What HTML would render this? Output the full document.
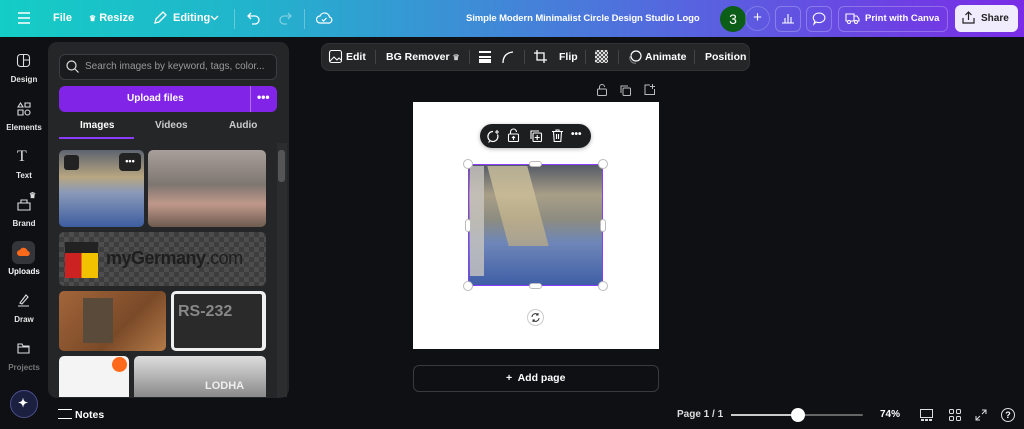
<!DOCTYPE html>
<html><head><meta charset="utf-8"><style>
*{box-sizing:border-box;margin:0;padding:0}
body{width:1024px;height:429px;overflow:hidden;background:#0e1014;font-family:"Liberation Sans",sans-serif;color:#fff;position:relative;font-weight:bold}
.abs{position:absolute}
.top{left:0;top:0;width:1024px;height:37px;background:linear-gradient(90deg,#14cdc6 0%,#22b3cc 25%,#3c8fd6 45%,#5a5fe0 70%,#7a2ce6 100%)}
.t{position:absolute;font-size:11px;color:#fff;white-space:nowrap}
.side .lbl{position:absolute;width:48px;text-align:center;font-size:8px;color:#e6e6e6;left:0}
.panel{left:48px;top:42px;width:241px;height:356px;background:#252627;border-radius:9px}
svg{position:absolute;overflow:visible}
</style></head><body>
<div class="abs top"></div>
<svg style="left:17px;top:12px" width="14" height="12"><path d="M1 1h12M1 6h12M1 11h12" stroke="#fff" stroke-width="1.6"/></svg>
<div class="t" style="left:53px;top:12px">File</div>
<div class="t" style="left:89px;top:12px"><span style="font-size:8px">♛</span> Resize</div>
<svg style="left:153px;top:11px" width="14" height="14"><path d="M2 12l1-4 7-7 3 3-7 7z" fill="none" stroke="#fff" stroke-width="1.3"/></svg>
<div class="t" style="left:173px;top:12px">Editing</div>
<svg style="left:210px;top:15px" width="9" height="6"><path d="M1 1l3.5 3.5L8 1" fill="none" stroke="#fff" stroke-width="1.3"/></svg>
<div class="abs" style="left:234px;top:9px;width:1px;height:20px;background:rgba(255,255,255,.3)"></div>
<svg style="left:247px;top:12px" width="14" height="12"><path d="M4 1L1 4l3 3M1 4h7a4 4 0 010 8H5" fill="none" stroke="#fff" stroke-width="1.3"/></svg>
<svg style="left:278px;top:12px" width="14" height="12"><path d="M10 1l3 3-3 3M13 4H6a4 4 0 000 8h3" fill="none" stroke="rgba(255,255,255,.4)" stroke-width="1.3"/></svg>
<div class="abs" style="left:304px;top:9px;width:1px;height:20px;background:rgba(255,255,255,.3)"></div>
<svg style="left:316px;top:12px" width="16" height="12"><path d="M4 11a3.5 3.5 0 010-7 5 5 0 019.5 1A3 3 0 0112 11z" fill="none" stroke="#fff" stroke-width="1.2"/><path d="M6 7.5l1.5 1.5 3-3" fill="none" stroke="#fff" stroke-width="1.2"/></svg>
<div class="t" style="left:466px;top:13px;font-size:9.5px;letter-spacing:-.1px">Simple Modern Minimalist Circle Design Studio Logo</div>
<div class="abs" style="left:720px;top:6px;width:26px;height:26px;border-radius:50%;background:#0c5d18;font-size:14px;text-align:center;line-height:26px;font-weight:normal">3</div>
<div class="abs" style="left:745px;top:6px;width:25px;height:25px;border-radius:50%;border:1px solid rgba(255,255,255,.2);text-align:center;line-height:22px;font-size:15px;font-weight:normal">+</div>
<div class="abs" style="left:775px;top:6px;width:26px;height:26px;border-radius:6px;border:1px solid rgba(255,255,255,.25)"></div>
<svg style="left:782px;top:13px" width="12" height="11"><path d="M0 10h12M3 10V5M6 10V1M9 10V4" stroke="#fff" stroke-width="1.1"/></svg>
<div class="abs" style="left:806px;top:6px;width:26px;height:26px;border-radius:6px;border:1px solid rgba(255,255,255,.25)"></div>
<svg style="left:812px;top:12px" width="14" height="13"><path d="M7 1a6 4.8 0 11-3 9L2 12l.8-3A6 4.8 0 017 1z" fill="none" stroke="#fff" stroke-width="1.1"/></svg>
<div class="abs" style="left:838px;top:6px;width:110px;height:26px;border-radius:6px;border:1px solid rgba(255,255,255,.25)"></div>
<svg style="left:845px;top:13px" width="15" height="11"><path d="M1 1h8v7H1zM9 3h3l2 3v2H9" fill="none" stroke="#fff" stroke-width="1.1"/><circle cx="4" cy="9" r="1.5" fill="#6a4ae2" stroke="#fff"/><circle cx="11" cy="9" r="1.5" fill="#6a4ae2" stroke="#fff"/></svg>
<div class="t" style="left:865px;top:13px;font-size:9.5px">Print with Canva</div>
<div class="abs" style="left:955px;top:5px;width:63px;height:27px;border-radius:6px;background:#f1ecfd"></div>
<svg style="left:962px;top:11px" width="13" height="13"><path d="M6.5 9V1M3.5 4l3-3 3 3M1 7v5h11V7" fill="none" stroke="#222" stroke-width="1.2"/></svg>
<div class="t" style="left:981px;top:13px;color:#222;font-size:10px">Share</div>

<div class="side">
<svg style="left:17px;top:54px" width="13" height="13"><rect x=".5" y=".5" width="12" height="12" rx="3" fill="none" stroke="#ddd" stroke-width="1.1"/><path d="M6.5 1v11M6.5 6H12" stroke="#ddd" stroke-width="1.1"/></svg>
<div class="lbl" style="top:75px">Design</div>
<svg style="left:17px;top:102px" width="14" height="14"><path d="M1 5l2.5-4L6 5zM8 1h5v4H8z M1 8h5v5H1z" fill="none" stroke="#ddd" stroke-width="1.1"/><circle cx="10.5" cy="10.5" r="2.5" fill="none" stroke="#ddd" stroke-width="1.1"/></svg>
<div class="lbl" style="top:123px">Elements</div>
<div class="abs" style="left:17px;top:148px;font-family:'Liberation Serif';font-weight:normal;font-size:16px;color:#ddd">T</div>
<div class="lbl" style="top:171px">Text</div>
<svg style="left:17px;top:198px" width="14" height="13"><path d="M1 5h12v7H1zM4 5V2h6v3" fill="none" stroke="#ddd" stroke-width="1.1"/></svg>
<div class="abs" style="left:29px;top:191px;font-size:8px;color:#ddd">♛</div>
<div class="lbl" style="top:219px">Brand</div>
<div class="abs" style="left:12px;top:241px;width:23px;height:23px;border-radius:6px;background:#33353a"></div>
<svg style="left:17px;top:247px" width="13" height="10"><path d="M3 9a3 3 0 010-6 4 4 0 017.5 1A2.5 2.5 0 0110 9z" fill="#ff6a1a"/></svg>
<div class="lbl" style="top:267px;color:#fff">Uploads</div>
<svg style="left:17px;top:293px" width="14" height="14"><path d="M3 10l6-8 2 2-6 7z M1 13h11" fill="none" stroke="#ddd" stroke-width="1.1"/></svg>
<div class="lbl" style="top:315px">Draw</div>
<svg style="left:17px;top:343px" width="13" height="11"><path d="M1 1h4l1 2h6v7H1z M1 4h11" fill="none" stroke="#ddd" stroke-width="1.1"/></svg>
<div class="lbl" style="top:363px;color:#777">Projects</div>
<div class="abs" style="left:10px;top:390px;width:28px;height:28px;border-radius:50%;background:#1c2040;border:1.5px solid #4b4f8c"></div>
<div class="abs" style="left:18px;top:396px;font-size:12px">✦</div>
</div>

<div class="abs panel"></div>
<div class="abs" style="left:59px;top:54px;width:218px;height:26px;border-radius:6px;background:#1a1b1d;border:1px solid #3c3d40"></div>
<svg style="left:66px;top:60px" width="13" height="13"><circle cx="5.5" cy="5.5" r="4.5" fill="none" stroke="#ddd" stroke-width="1.2"/><path d="M9 9l3.5 3.5" stroke="#ddd" stroke-width="1.2"/></svg>
<div class="t" style="left:85px;top:61px;font-size:10px;color:#999;font-weight:normal">Search images by keyword, tags, color...</div>
<div class="abs" style="left:59px;top:86px;width:218px;height:26px;border-radius:6px;background:#8224e8"></div>
<div class="abs" style="left:250px;top:86px;width:1px;height:26px;background:rgba(255,255,255,.35)"></div>
<div class="t" style="left:127px;top:93px;font-size:10px">Upload files</div>
<div class="t" style="left:257px;top:90px;font-size:12px">•••</div>
<div class="t" style="left:80px;top:120px;font-size:10px">Images</div>
<div class="t" style="left:155px;top:120px;font-size:10px;color:#ccc">Videos</div>
<div class="t" style="left:229px;top:120px;font-size:10px;color:#ccc">Audio</div>
<div class="abs" style="left:59px;top:137px;width:75px;height:2px;background:#8b3dff"></div>
<div class="abs" style="left:277px;top:143px;width:10px;height:254px;background:#2c2d2f"></div>
<div class="abs" style="left:278px;top:150px;width:7px;height:32px;background:#555;border-radius:3px"></div>
<div class="abs" style="left:59px;top:150px;width:85px;height:77px;border-radius:5px;background:linear-gradient(180deg,#5d6370 0%,#b8a680 35%,#8a9ab8 55%,#3e5da0 100%)"></div>
<div class="abs" style="left:64px;top:155px;width:15px;height:15px;border-radius:3px;background:#222"></div>
<div class="abs" style="left:119px;top:153px;width:22px;height:18px;border-radius:4px;background:#222;font-size:9px;text-align:center;line-height:17px">•••</div>
<div class="abs" style="left:148px;top:150px;width:118px;height:77px;border-radius:5px;background:linear-gradient(180deg,#a89f9b 0%,#7e7670 45%,#c0988a 70%,#6e5b50 100%)"></div>
<div class="abs" style="left:59px;top:232px;width:207px;height:54px;border-radius:5px;background:repeating-conic-gradient(#3d3d3e 0 25%,#4d4d4e 0 50%) 0 0/10px 10px"></div>
<div class="abs" style="left:65px;top:242px;width:33px;height:36px;background:linear-gradient(90deg,#c22 0 50%,#f2c200 50%)"></div>
<div class="abs" style="left:65px;top:242px;width:33px;height:11px;background:#222"></div>
<div class="t" style="left:106px;top:248px;font-size:18px;color:#1e1e1e;letter-spacing:-.5px">my<b>Germany</b><span style="font-weight:normal">.com</span></div>
<div class="abs" style="left:59px;top:291px;width:107px;height:60px;border-radius:5px;background:linear-gradient(135deg,#a3653a,#7a4a28 60%,#b47a48)"></div>
<div class="abs" style="left:83px;top:298px;width:30px;height:45px;background:#5a4a3a"></div>
<div class="abs" style="left:171px;top:291px;width:95px;height:60px;border-radius:5px;background:#f0f0f0"></div>
<div class="abs" style="left:174px;top:294px;width:88px;height:54px;background:#2a2a2a;border-radius:2px"></div>
<div class="t" style="left:178px;top:303px;font-size:16px;color:#888">RS-232</div>
<div class="abs" style="left:59px;top:356px;width:70px;height:41px;border-radius:5px 5px 0 0;background:#f4f4f4"></div>
<div class="abs" style="left:112px;top:357px;width:15px;height:15px;border-radius:50%;background:#ff6a1a"></div>
<div class="abs" style="left:134px;top:356px;width:132px;height:41px;border-radius:5px 5px 0 0;background:linear-gradient(180deg,#ddd,#8a8a8a)"></div>
<div class="t" style="left:205px;top:380px;font-size:11px;color:#eee">LODHA</div>

<div class="abs" style="left:58px;top:409px;width:14px;height:10px;border-top:1.5px solid #fff;border-bottom:1.5px solid #fff"></div>
<div class="t" style="left:75px;top:409px;font-size:10.5px">Notes</div>

<div class="abs" style="left:321px;top:43px;width:429px;height:28px;border-radius:8px;background:#252627;border:1px solid #333"></div>
<svg style="left:329px;top:50px" width="13" height="13"><rect x=".5" y=".5" width="12" height="12" rx="2" fill="none" stroke="#fff" stroke-width="1.1"/><path d="M1 11l4-4 3 3 2-2 2 2" fill="none" stroke="#fff"/></svg>
<div class="t" style="left:346px;top:51px;font-size:10.5px">Edit</div>
<div class="abs" style="left:375px;top:50px;width:1px;height:14px;background:#444"></div>
<div class="t" style="left:386px;top:51px;font-size:10.5px">BG Remover <span style="font-size:8px;color:#ccc">♛</span></div>
<div class="abs" style="left:469px;top:50px;width:1px;height:14px;background:#444"></div>
<div class="abs" style="left:479px;top:51px;width:12px;height:12px;border-top:2px solid #fff;border-bottom:4px solid #fff"><div style="margin-top:3px;height:2px;background:#fff"></div></div>
<svg style="left:502px;top:51px" width="12" height="12"><path d="M1 12Q1 2 11 1" fill="none" stroke="#fff" stroke-width="1.3"/></svg>
<div class="abs" style="left:524px;top:50px;width:1px;height:14px;background:#444"></div>
<svg style="left:534px;top:50px" width="13" height="13"><path d="M3 0v10h10M0 3h10v10" fill="none" stroke="#fff" stroke-width="1.3"/></svg>
<div class="t" style="left:559px;top:51px;font-size:10.5px">Flip</div>
<div class="abs" style="left:585px;top:50px;width:1px;height:14px;background:#444"></div>
<div class="abs" style="left:595px;top:50px;width:13px;height:13px;background:repeating-conic-gradient(#ddd 0 25%,#555 0 50%) 0 0/4px 4px"></div>
<div class="abs" style="left:618px;top:50px;width:1px;height:14px;background:#444"></div>
<svg style="left:628px;top:50px" width="14" height="14"><circle cx="8" cy="6" r="5" fill="none" stroke="#fff" stroke-width="1.2"/><path d="M3 5a5 5 0 005 8" fill="none" stroke="#888"/></svg>
<div class="t" style="left:645px;top:51px;font-size:10.5px">Animate</div>
<div class="abs" style="left:694px;top:50px;width:1px;height:14px;background:#444"></div>
<div class="t" style="left:705px;top:51px;font-size:10.5px">Position</div>

<svg style="left:597px;top:84px" width="10" height="12"><rect x=".5" y="5" width="9" height="6.5" rx="1" fill="none" stroke="#bbb"/><path d="M2.5 5V3a2.5 2.5 0 015 0" fill="none" stroke="#bbb"/></svg>
<svg style="left:620px;top:85px" width="11" height="11"><rect x="3" y="3" width="7.5" height="7.5" rx="1" fill="none" stroke="#bbb"/><path d="M1 8V1h7" fill="none" stroke="#bbb"/></svg>
<svg style="left:644px;top:84px" width="11" height="11"><path d="M6 1H1v9.5h9.5V5M8.5 0v5M6 2.5h5" fill="none" stroke="#bbb"/></svg>

<div class="abs" style="left:413px;top:102px;width:246px;height:247px;background:#fff"></div>
<div class="abs" style="left:480px;top:124px;width:111px;height:24px;border-radius:12px;background:#1d1e20;box-shadow:0 1px 4px rgba(0,0,0,.3)"></div>
<svg style="left:487px;top:130px" width="13" height="13"><path d="M6 1.5a5 5 0 104.5 3" fill="none" stroke="#fff" stroke-width="1.2"/><path d="M3 11l-1.5 1.5" stroke="#fff"/><path d="M10 0v4M8 2h4" stroke="#fff" stroke-width="1.1"/></svg>
<svg style="left:508px;top:129px" width="11" height="13"><rect x=".5" y="5" width="10" height="7.5" rx="1" fill="none" stroke="#fff" stroke-width="1.1"/><path d="M2.5 5V3a3 3 0 016 0M5.5 11V7.5M4 9l1.5-1.5L7 9" fill="none" stroke="#fff" stroke-width="1.1"/></svg>
<svg style="left:530px;top:130px" width="12" height="12"><rect x="3" y="3" width="8.5" height="8.5" rx="1" fill="none" stroke="#fff" stroke-width="1.1"/><path d="M1 9V1h8M7.2 5v5M4.7 7.5h5" fill="none" stroke="#fff" stroke-width="1.1"/></svg>
<svg style="left:552px;top:129px" width="11" height="13"><path d="M0 2.5h11M4 2.5V1h3v1.5M1.5 2.5l.7 10h6.6l.7-10M4.5 5v5M6.5 5v5" fill="none" stroke="#fff" stroke-width="1.1"/></svg>
<div class="t" style="left:571px;top:129px;font-size:10px">•••</div>
<div class="abs" style="left:468px;top:164px;width:135px;height:122px;border:1.5px solid #8b3dff;background:linear-gradient(180deg,#555b66 0%,#a99f88 25%,#8d8c80 45%,#6e86b8 65%,#3f5ea6 100%)"></div>
<div class="abs" style="left:498px;top:166px;width:40px;height:80px;background:linear-gradient(180deg,#ddd0a8,#c0ad80);opacity:.7;transform:skewX(15deg)"></div>
<div class="abs" style="left:470px;top:166px;width:14px;height:110px;background:#c9c6c0;opacity:.8"></div>
<div class="abs" style="left:463px;top:159px;width:10px;height:10px;border-radius:50%;background:#fff;border:1px solid #bbb"></div>
<div class="abs" style="left:598px;top:159px;width:10px;height:10px;border-radius:50%;background:#fff;border:1px solid #bbb"></div>
<div class="abs" style="left:463px;top:281px;width:10px;height:10px;border-radius:50%;background:#fff;border:1px solid #bbb"></div>
<div class="abs" style="left:598px;top:281px;width:10px;height:10px;border-radius:50%;background:#fff;border:1px solid #bbb"></div>
<div class="abs" style="left:529px;top:161px;width:13px;height:6px;border-radius:3px;background:#fff;border:1px solid #bbb"></div>
<div class="abs" style="left:529px;top:283px;width:13px;height:6px;border-radius:3px;background:#fff;border:1px solid #bbb"></div>
<div class="abs" style="left:465px;top:219px;width:6px;height:13px;border-radius:3px;background:#fff;border:1px solid #bbb"></div>
<div class="abs" style="left:600px;top:219px;width:6px;height:13px;border-radius:3px;background:#fff;border:1px solid #bbb"></div>
<div class="abs" style="left:527px;top:309px;width:17px;height:17px;border-radius:50%;background:#fff;border:1px solid #ccc"></div>
<svg style="left:531px;top:313px" width="9" height="9"><path d="M1 4a3.5 3.5 0 016-2.3M8 5a3.5 3.5 0 01-6 2.3M7 0v2H5M2 9V7h2" fill="none" stroke="#333" stroke-width="1"/></svg>

<div class="abs" style="left:413px;top:365px;width:246px;height:27px;border-radius:6px;border:1px solid #3a3b3e"></div>
<div class="t" style="left:506px;top:372px;font-size:10.5px">+&nbsp; Add page</div>

<div class="t" style="left:677px;top:409px;font-size:10px;color:#ddd">Page 1 / 1</div>
<div class="abs" style="left:731px;top:414px;width:132px;height:2px;background:#666;border-radius:1px"></div>
<div class="abs" style="left:731px;top:414px;width:66px;height:2px;background:#ccc"></div>
<div class="abs" style="left:791px;top:408px;width:14px;height:14px;border-radius:50%;background:#fff"></div>
<div class="t" style="left:880px;top:409px;font-size:10px">74%</div>
<svg style="left:920px;top:409px" width="13" height="13"><rect x=".5" y=".5" width="12" height="8" fill="none" stroke="#ddd"/><path d="M1 11h3M5 11h3M9 11h3" stroke="#ddd" stroke-width="2"/></svg>
<svg style="left:949px;top:409px" width="12" height="12"><rect x=".5" y=".5" width="4" height="4" rx="1" fill="none" stroke="#ddd"/><rect x="7.5" y=".5" width="4" height="4" rx="1" fill="none" stroke="#ddd"/><rect x=".5" y="7.5" width="4" height="4" rx="1" fill="none" stroke="#ddd"/><rect x="7.5" y="7.5" width="4" height="4" rx="1" fill="none" stroke="#ddd"/></svg>
<svg style="left:975px;top:409px" width="12" height="12"><path d="M1 11l4-4M1 7v4h4M11 1L7 5M7 1h4v4" fill="none" stroke="#ddd"/></svg>
<div class="abs" style="left:1001px;top:408px;width:14px;height:14px;border-radius:50%;border:1.3px solid #ddd;font-size:9px;text-align:center;line-height:12px">?</div>
</body></html>
